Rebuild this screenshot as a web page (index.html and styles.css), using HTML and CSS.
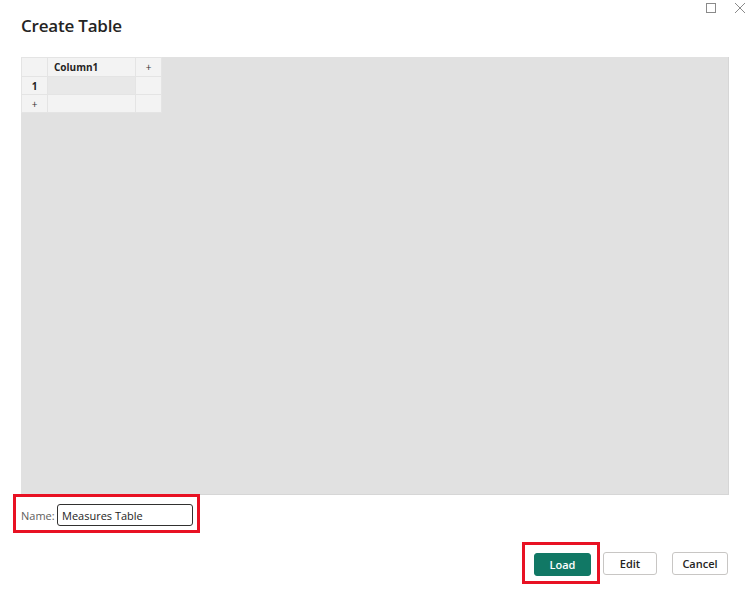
FILE: index.html
```html
<!DOCTYPE html>
<html lang="en">
<head>
    <meta charset="UTF-8">
    <meta name="viewport" content="width=device-width, initial-scale=1.0">
    <title>Create Table</title>
    <link rel="stylesheet" href="styles.css">
</head>
<body>
    <div class="dialog">
        <div class="header">
            <h1>Create Table</h1>
            <div class="window-controls">
                <svg width="12" height="12" viewBox="0 0 12 12"><rect x="1.5" y="1.5" width="9" height="9" fill="none" stroke="#8a8a8a" stroke-width="1"/></svg>
                <svg width="12" height="12" viewBox="0 0 12 12"><path d="M1 1 L11 11 M11 1 L1 11" stroke="#8a8a8a" stroke-width="1"/></svg>
            </div>
        </div>

        <div class="grid-area">
            <table class="data-table">
                <tr>
                    <th class="corner"></th>
                    <th class="col-head">Column1</th>
                    <th class="add">+</th>
                </tr>
                <tr>
                    <td class="row-num">1</td>
                    <td class="cell selected"></td>
                    <td class="cell"></td>
                </tr>
                <tr>
                    <td class="row-num add">+</td>
                    <td class="cell"></td>
                    <td class="cell"></td>
                </tr>
            </table>
        </div>

        <div class="name-row">
            <label for="table-name">Name:</label>
            <input type="text" id="table-name" value="Measures Table">
        </div>

        <div class="actions">
            <div class="highlight">
                <button class="primary">Load</button>
            </div>
            <button class="edit">Edit</button>
            <button class="cancel">Cancel</button>
        </div>
    </div>
</body>
</html>
```

FILE: styles.css
```css
body {
    margin: 0;
    background: #fff;
    font-family: "Open Sans", "Noto Sans", Arial, sans-serif;
    color: #252423;
}

.dialog {
    width: 750px;
    height: 590px;
    display: flex;
    flex-direction: column;
}

.header {
    display: flex;
    justify-content: space-between;
    align-items: flex-start;
    height: 57px;
}

h1 {
    font-size: 17px;
    font-weight: 600;
    margin: 14px 0 0 21px;
    letter-spacing: -0.2px;
}

.window-controls {
    display: flex;
    gap: 17px;
    margin: 2px 4px 0 0;
}

.grid-area {
    margin: 0 21px;
    height: 438px;
    background: #e1e1e1;
    border-right: 1px solid #d6d6d6;
    border-bottom: 1px solid #d6d6d6;
    box-sizing: border-box;
}

.data-table {
    border-collapse: collapse;
    font-size: 10px;
    color: #252423;
}

.data-table th,
.data-table td {
    background: #f3f3f3;
    border: 1px solid #e4e4e4;
    padding: 0;
    height: 17px;
}

.data-table tr:first-child th {
    height: 18px;
}

.corner,
.row-num,
.add {
    width: 25px;
    text-align: center;
}

.col-head {
    width: 81px;
    text-align: left;
    padding-left: 6px !important;
    font-weight: 700;
}

.row-num {
    font-weight: 700;
}

.add {
    font-weight: 400;
    font-size: 10px;
    color: #323130;
}

.selected {
    background: #e8e8e8 !important;
}

.name-row {
    display: flex;
    align-items: center;
    margin: -1px 0 0 13px;
    width: 187px;
    height: 39px;
    border: 3px solid #e81123;
    box-sizing: border-box;
    padding: 3px 4px 0 5px;
    font-size: 11px;
    color: #605e5c;
}

.name-row label {
    width: 36px;
}

.name-row input {
    width: 136px;
    height: 22px;
    box-sizing: border-box;
    border: 1px solid #323130;
    border-radius: 3px;
    padding: 0 4px;
    font-family: inherit;
    font-size: 11px;
    color: #252423;
}

.actions {
    display: flex;
    justify-content: flex-end;
    align-items: center;
    margin-top: 9px;
    padding-right: 22px;
}

.highlight {
    border: 3px solid #e81123;
    width: 78px;
    height: 42px;
    box-sizing: border-box;
    padding: 7px 0 0 9px;
}

button {
    height: 23px;
    border-radius: 3px;
    font-family: inherit;
    font-size: 11px;
    font-weight: 600;
    cursor: pointer;
    padding: 0;
}

button.primary {
    width: 57px;
    background: #117865;
    border: 1px solid #117865;
    color: #fff;
}

button.edit,
button.cancel {
    background: #fff;
    border: 1px solid #c8c6c4;
    color: #252423;
}

button.edit {
    width: 54px;
    margin-left: 3px;
}

button.cancel {
    width: 56px;
    margin-left: 15px;
}
```
